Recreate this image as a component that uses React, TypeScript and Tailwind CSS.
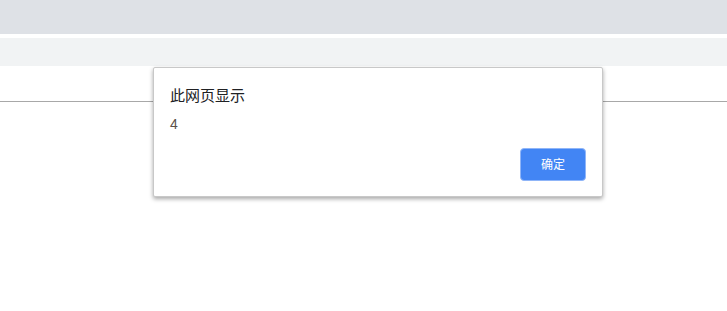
export default function App() {
  return (
    <div className="relative h-[311px] w-full overflow-hidden bg-white font-['Liberation_Sans','Noto_Sans_CJK_SC',sans-serif]">
      {/* browser chrome */}
      <div className="h-[34px] bg-[#dee1e6]" />
      <div className="mt-[4px] h-[28px] bg-[#f1f3f4]" />
      <div className="h-[36px] border-b border-[#a8a8a8]" />

      {/* alert dialog */}
      <div className="absolute left-[153px] top-[67px] flex w-[450px] flex-col rounded-[2px] border border-[#c8c8c8] bg-white px-[16px] pb-[15px] pt-[19px] shadow-[0_2px_4px_rgba(0,0,0,0.35)]">
        <p className="text-[15px] leading-[18px] text-[#202124]">此网页显示</p>
        <p className="mt-[11px] text-[14px] leading-[16px] text-[#5a5049]">4</p>
        <div className="mt-[16px] flex justify-end">
          <button className="h-[33px] w-[66px] rounded-[4px] border border-[#8fb5f8] bg-[#4285f4] text-[12px] text-white">
            确定
          </button>
        </div>
      </div>
    </div>
  );
}
